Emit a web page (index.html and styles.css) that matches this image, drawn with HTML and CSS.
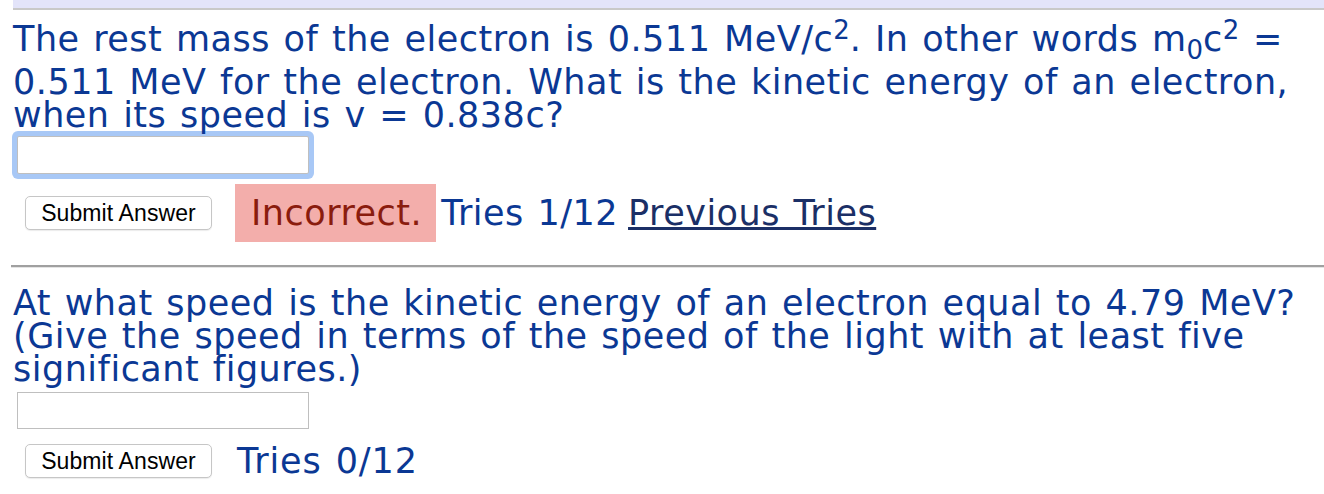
FILE: index.html
```html
<!DOCTYPE html>
<html lang="en">
<head>
  <meta charset="UTF-8" />
  <title>Problem</title>
  <link rel="stylesheet" href="styles.css">
</head>
<body>
  <div class="topbar"></div>

  <div class="problem first">
    <div class="question">
      The rest mass of the electron is 0.511 MeV/c<sup>2</sup>. In other words m<sub>0</sub>c<sup>2</sup> =
      0.511 MeV for the electron. What is the kinetic energy of an electron, when its speed is v = 0.838c?
    </div>
    <input type="text" class="answer focused" />
    <div class="submit-row">
      <button class="submit">Submit Answer</button>
      <span class="incorrect">Incorrect.</span>
      <span class="tries">Tries 1/12</span>
      <a href="#" class="prev">Previous Tries</a>
    </div>
  </div>

  <hr class="sep" />

  <div class="problem second">
    <div class="question">
      At what speed is the kinetic energy of an electron equal to 4.79 MeV? (Give the speed in terms of the speed of the light with at least five significant figures.)
    </div>
    <input type="text" class="answer" />
    <div class="submit-row">
      <button class="submit">Submit Answer</button>
      <span class="tries">Tries 0/12</span>
    </div>
  </div>
</body>
</html>
```

FILE: styles.css
```css
body {
  margin: 0;
  padding: 0;
  background-color: white;
  font-family: "DejaVu Sans", Verdana, sans-serif;
  color: #0b3894;
}
.topbar {
  margin-left: 13px;
  height: 8px;
  background-color: #e3e4fa;
  border-bottom: 2px solid #c9c9c9;
}
.problem {
  padding-left: 13px;
}
.first {
  margin-top: 13px;
}
.question, .submit-row {
  font-size: 35px;
  letter-spacing: 0.5px;
  word-spacing: 2px;
}
.question {
  line-height: 33px;
  width: 1290px;
}
.question sup {
  font-size: 26px;
  line-height: 0;
  vertical-align: 12px;
  letter-spacing: 0;
}
.question sub {
  font-size: 26px;
  line-height: 32px;
  vertical-align: -8px;
  letter-spacing: 0;
}
.answer {
  display: block;
  box-sizing: border-box;
  width: 292px;
  height: 38px;
  margin: 4px 0 0 4px;
  border: 1px solid #bfbfbf;
  background: white;
  padding: 0;
}
.answer.focused {
  box-shadow: 0 0 0 1px #a8c8f6, 0 0 0 5px #a8c8f6;
  border-radius: 2px;
}
.submit-row {
  display: flex;
  align-items: center;
  height: 58px;
  margin-top: 10px;
}
.submit {
  font-family: "Liberation Sans", Arial, sans-serif;
  font-size: 23px;
  letter-spacing: 0.1px;
  word-spacing: 0;
  color: black;
  background: white;
  border: 1px solid #c6c6c6;
  border-radius: 5px;
  width: 187px;
  height: 34px;
  margin-left: 12px;
  margin-right: 23px;
  padding: 0;
  box-shadow: 0 1px 1px rgba(0,0,0,0.08);
}
.incorrect {
  background-color: #f3aeab;
  color: #8a1c0e;
  padding: 12px 14px 12px 16px;
  line-height: 34px;
  margin-right: 5px;
}
.tries {
  margin-right: 10px;
}
.prev {
  color: #1b2f66;
}
.sep {
  margin: 23px 0 0 11px;
  border: none;
  border-top: 2px solid #a0a0a0;
  border-bottom: 1px solid #e4e4e4;
  height: 0;
}
.second {
  margin-top: 19px;
}
.second .answer {
  margin-top: 6px;
  height: 37px;
}
.second .submit-row {
  margin-top: 3px;
}
.second .submit {
  margin-right: 25px;
}
.second .tries {
  letter-spacing: 0.9px;
}
```
